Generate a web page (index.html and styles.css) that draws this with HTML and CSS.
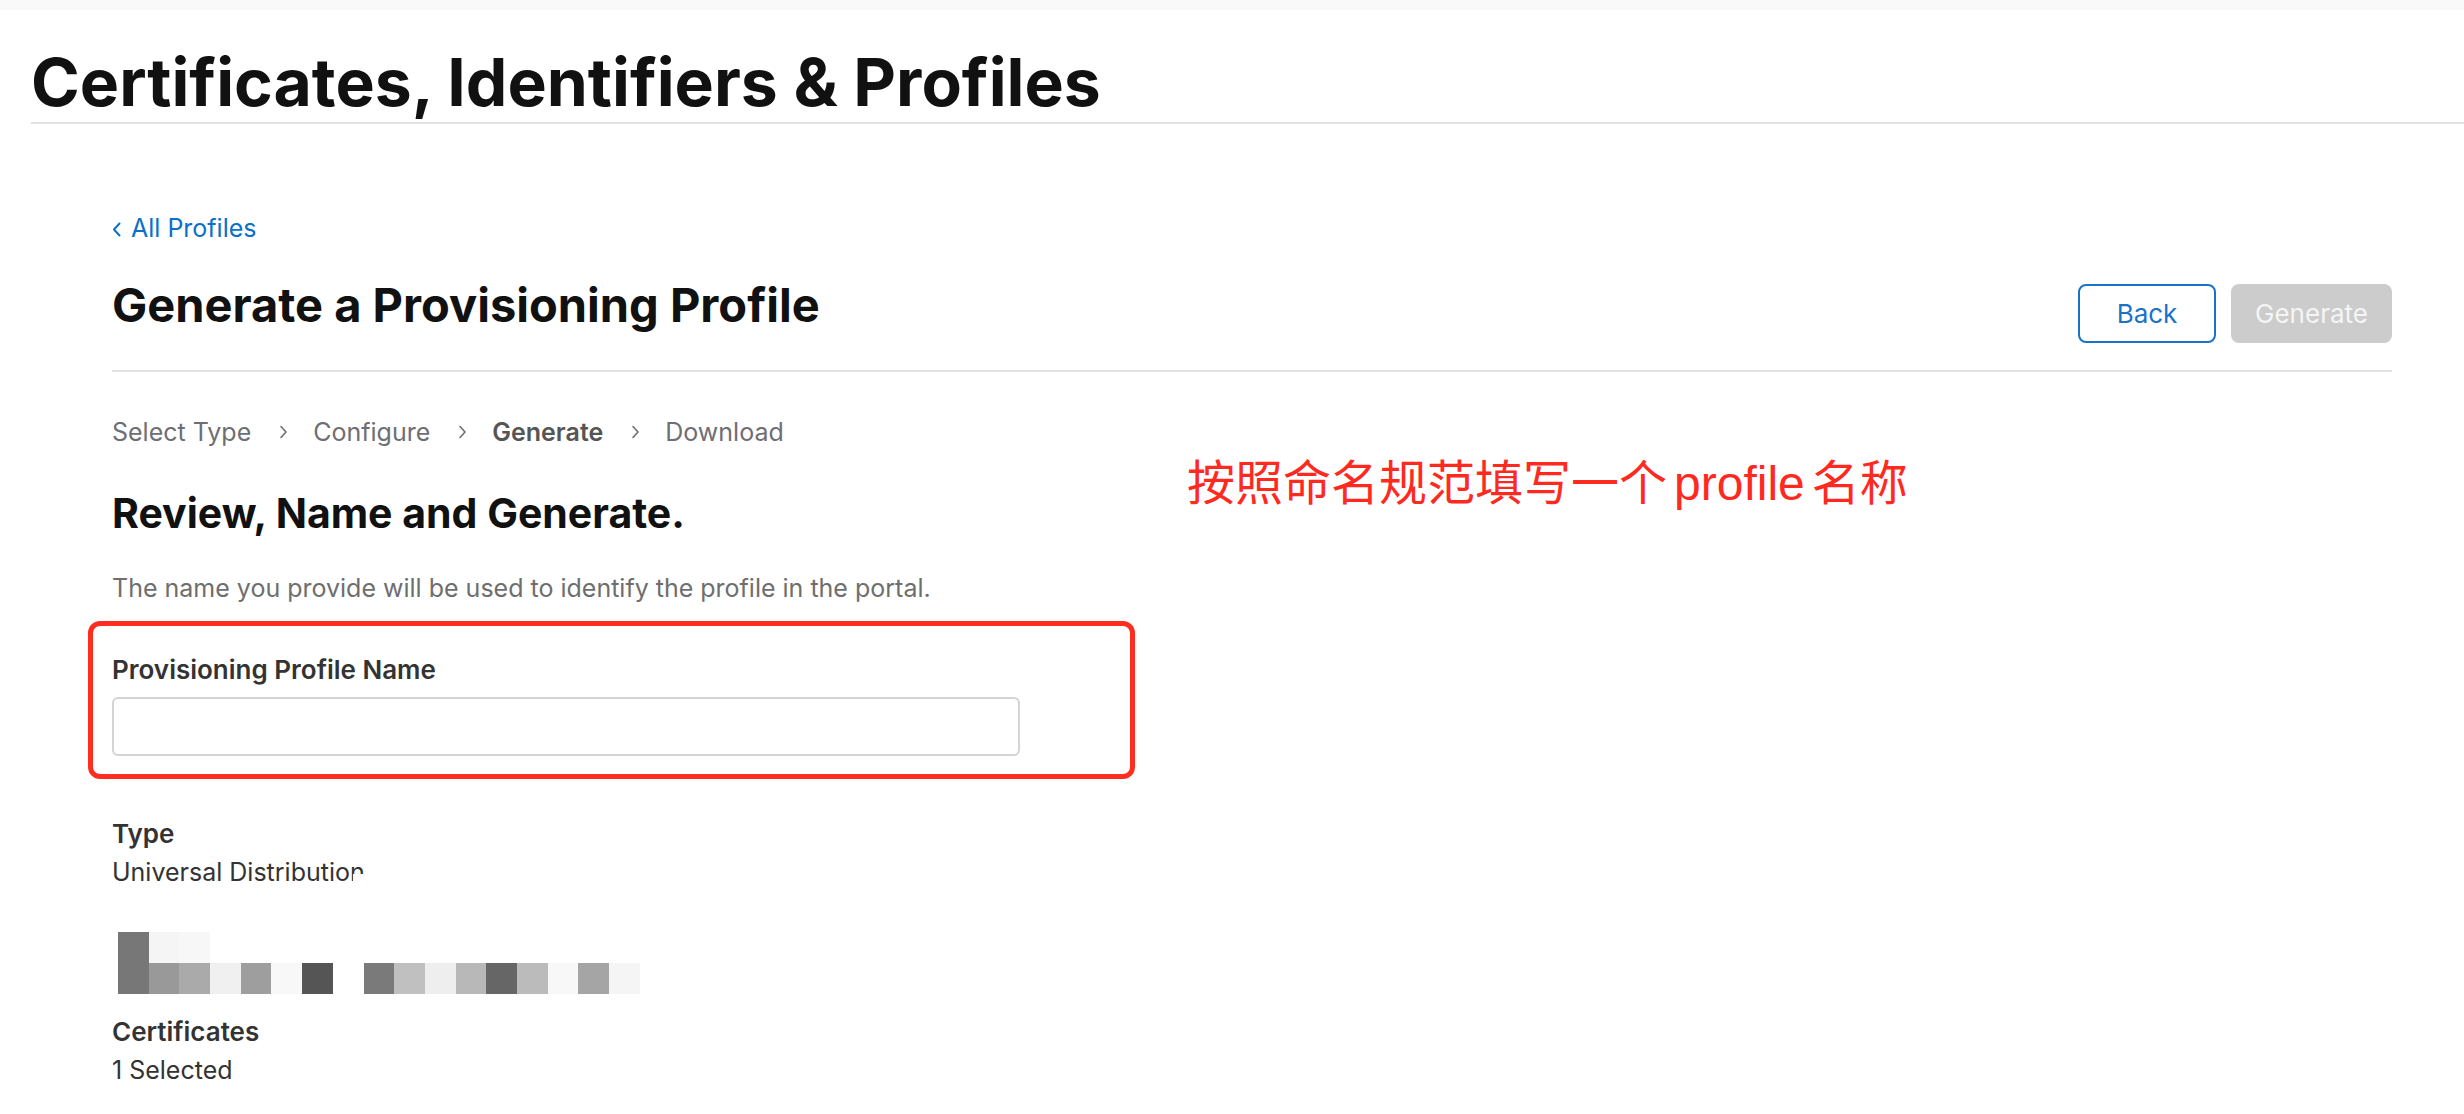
FILE: index.html
```html
<!DOCTYPE html>
<html lang="en">
<head>
<meta charset="utf-8">
<title>Certificates, Identifiers &amp; Profiles</title>
<link rel="stylesheet" href="styles.css">
</head>
<body>
<div class="topbar"></div>
<header class="site-header">
  <h1 class="site-title">Certificates, Identifiers &amp; Profiles</h1>
</header>
<main class="content">
  <a class="back-link" href="#"><svg class="back-chev" width="9" height="15" viewBox="0 0 9 15"><path d="M7.5 1.5 L2 7.5 L7.5 13.5" fill="none" stroke="#0a70c8" stroke-width="2" stroke-linecap="round" stroke-linejoin="round"/></svg>All Profiles</a>
  <div class="page-head">
    <h2 class="page-title">Generate a Provisioning Profile</h2>
    <div class="actions">
      <button class="btn btn-back">Back</button>
      <button class="btn btn-generate">Generate</button>
    </div>
  </div>
  <nav class="steps">
    <span class="step">Select Type</span>
    <svg class="chev" width="9" height="14" viewBox="0 0 9 14"><path d="M2 1.5 L7 7 L2 12.5" fill="none" stroke="#6e6e73" stroke-width="1.6" stroke-linecap="round" stroke-linejoin="round"/></svg>
    <span class="step">Configure</span>
    <svg class="chev" width="9" height="14" viewBox="0 0 9 14"><path d="M2 1.5 L7 7 L2 12.5" fill="none" stroke="#6e6e73" stroke-width="1.6" stroke-linecap="round" stroke-linejoin="round"/></svg>
    <span class="step step-current">Generate</span>
    <svg class="chev" width="9" height="14" viewBox="0 0 9 14"><path d="M2 1.5 L7 7 L2 12.5" fill="none" stroke="#6e6e73" stroke-width="1.6" stroke-linecap="round" stroke-linejoin="round"/></svg>
    <span class="step">Download</span>
  </nav>
  <h3 class="section-title">Review, Name and Generate.</h3>
  <p class="desc">The name you provide will be used to identify the profile in the portal.</p>
  <div class="highlight">
    <label class="field-label" for="pname">Provisioning Profile Name</label>
    <input class="field-input" id="pname" type="text">
  </div>
  <div class="info">
    <div class="info-label">Type</div>
    <div class="info-value">Universal Distribution<span class="mask"></span></div>
  </div>
  <div class="mosaic">
    <div class="mrow">
      <span class="cell tall" style="background:#777"></span>
      <span class="cell" style="background:#f5f5f5"></span>
      <span class="cell" style="background:#f7f7f7"></span>
    </div>
    <div class="mrow mrow2">
      <span class="cell" style="background:#999"></span>
      <span class="cell" style="background:#aaa"></span>
      <span class="cell" style="background:#f0f0f0"></span>
      <span class="cell" style="background:#9e9e9e"></span>
      <span class="cell" style="background:#f8f8f8"></span>
      <span class="cell" style="background:#555"></span>
      <span class="cell" style="background:#fff"></span>
      <span class="cell" style="background:#7a7a7a"></span>
      <span class="cell" style="background:#c0c0c0"></span>
      <span class="cell" style="background:#eeeeee"></span>
      <span class="cell" style="background:#b8b8b8"></span>
      <span class="cell" style="background:#666"></span>
      <span class="cell" style="background:#bbb"></span>
      <span class="cell" style="background:#f8f8f8"></span>
      <span class="cell" style="background:#a5a5a5"></span>
      <span class="cell" style="background:#f5f5f5"></span>
    </div>
  </div>
  <div class="info info-cert">
    <div class="info-label">Certificates</div>
    <div class="info-value">1 Selected</div>
  </div>
  <div class="note">按照命名规范填写一个<span class="note-latin">profile</span>名称</div>
</main>
</body>
</html>
```

FILE: styles.css
```css
html, body {
  margin: 0;
  padding: 0;
  background: #ffffff;
}
body {
  font-family: Inter, "Noto Sans", "Liberation Sans", sans-serif;
  color: #111111;
  width: 2464px;
  height: 1114px;
  overflow: hidden;
}
.topbar {
  height: 10px;
  background: #f9f9f9;
}
.site-header {
  margin: 33px 0 0 31px;
  border-bottom: 2px solid #e1e1e1;
}
.site-title {
  margin: 0;
  font-size: 66px;
  line-height: 79px;
  font-weight: 700;
  color: #111111;
}
.content {
  position: relative;
  padding: 0 72px 0 112px;
}
.back-link {
  display: flex;
  align-items: flex-end;
  gap: 10px;
  margin-top: 89px;
  height: 30px;
  font-size: 25px;
  line-height: 30px;
  color: #0a70c8;
  text-decoration: none;
}
.back-chev {
  margin-bottom: 6px;
}
.page-head {
  display: flex;
  justify-content: space-between;
  align-items: flex-start;
  margin-top: 34px;
  padding-bottom: 27px;
  border-bottom: 2px solid #e1e1e1;
}
.page-title {
  margin: 0;
  font-size: 47px;
  line-height: 56px;
  font-weight: 700;
  color: #111111;
}
.actions {
  display: flex;
  gap: 15px;
  margin-top: 7px;
}
.btn {
  height: 59px;
  border-radius: 8px;
  font-family: Inter, "Liberation Sans", sans-serif;
  font-size: 26px;
  padding: 0;
  cursor: pointer;
}
.btn-back {
  width: 138px;
  background: #ffffff;
  border: 2px solid #1a73c6;
  color: #1a73c6;
}
.btn-generate {
  width: 161px;
  background: #cccccc;
  border: none;
  color: #f5f5f5;
}
.steps {
  display: flex;
  align-items: center;
  margin-top: 45px;
  height: 30px;
  font-size: 25px;
  color: #6e6e73;
}
.step {
  line-height: 30px;
}
.step-current {
  font-weight: 600;
  color: #555555;
}
.chev {
  margin: 0 25px 0 28px;
}
.section-title {
  margin: 41px 0 0 0;
  font-size: 41px;
  line-height: 50px;
  font-weight: 700;
  color: #111111;
}
.desc {
  margin: 35px 0 0 0;
  font-size: 25px;
  line-height: 30px;
  color: #6e6e6e;
}
.highlight {
  margin: 18px 0 0 -24px;
  width: 1047px;
  box-sizing: border-box;
  border: 5px solid #ff2d20;
  border-radius: 12px;
  padding: 28px 110px 18px 19px;
}
.field-label {
  display: block;
  font-size: 26px;
  line-height: 32px;
  font-weight: 600;
  color: #333333;
}
.field-input {
  display: block;
  margin-top: 11px;
  width: 100%;
  height: 59px;
  box-sizing: border-box;
  border: 2px solid #d4d4d4;
  border-radius: 6px;
  background: #ffffff;
  font-size: 24px;
  padding: 0 12px;
}
.info {
  margin-top: 36px;
}
.info-label {
  font-size: 26px;
  line-height: 38px;
  font-weight: 600;
  color: #333333;
}
.info-value {
  position: relative;
  display: inline-block;
  font-size: 25px;
  line-height: 38px;
  color: #333333;
}
.mask {
  position: absolute;
  right: -2px;
  top: 21px;
  width: 14px;
  height: 17px;
  background: #ffffff;
}
.mosaic {
  margin: 41px 0 0 6px;
  display: flex;
  flex-direction: column;
}
.mrow {
  display: flex;
  height: 31px;
}
.mrow2 {
  padding-left: 30.7px;
}
.cell {
  width: 30.7px;
  height: 31px;
  flex: none;
}
.cell.tall {
  height: 62px;
}
.info-cert {
  margin-top: 19px;
}
.note {
  position: absolute;
  left: 1187px;
  top: 236px;
  font-family: "Noto Sans CJK SC", "Noto Sans", sans-serif;
  font-size: 48px;
  line-height: 60px;
  color: #ff2a1f;
  white-space: nowrap;
}
.note-latin {
  font-family: "Liberation Sans", Arial, sans-serif;
  font-weight: 400;
  margin: 0 7px;
}
```
